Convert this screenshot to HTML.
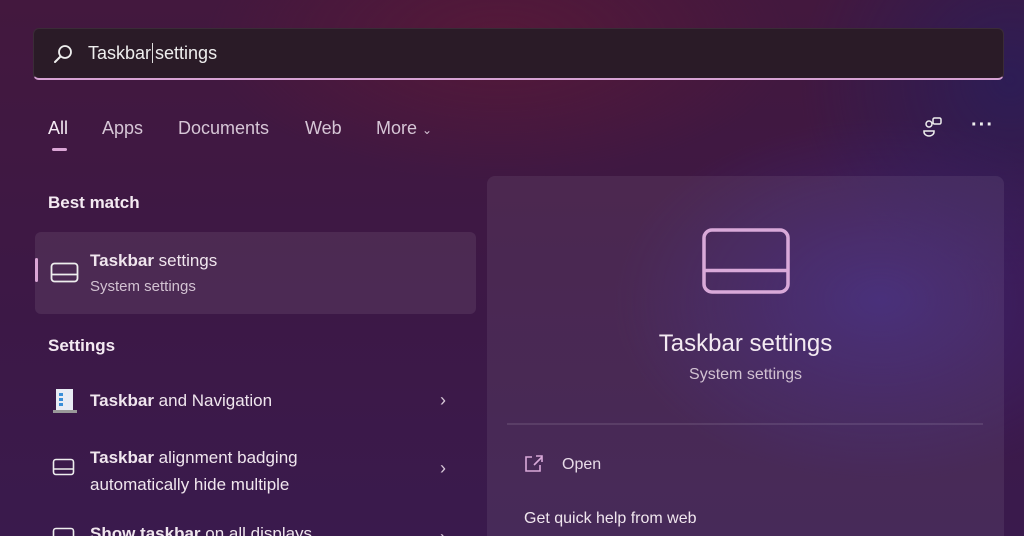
<!DOCTYPE html>
<html style="width:1024px;height:536px;overflow:hidden"><head><meta charset="utf-8"><style>
*{margin:0;padding:0;box-sizing:border-box}
body{width:1024px;height:536px;overflow:hidden;position:relative;font-family:"Segoe UI","Liberation Sans",sans-serif;color:#f2e8f0;
background:
radial-gradient(ellipse 380px 260px at 880px 300px,rgba(60,35,120,.85),transparent 70%),
radial-gradient(ellipse 420px 200px at 500px 40px,rgba(90,25,55,.8),transparent 70%),
radial-gradient(ellipse 300px 300px at 1010px 80px,rgba(40,30,90,.8),transparent 70%),
linear-gradient(180deg,#43183e 0%,#3d1845 50%,#3a1a4d 100%);}
.abs{position:absolute;white-space:nowrap}
.search{left:33px;top:28px;width:971px;height:52px;background:#2a1b27;border-radius:6px;border:1px solid rgba(255,255,255,.08);border-bottom:2px solid #d7a2d4}
.tab{top:118px;font-size:18px;color:#d6c6d6}
.h{font-size:17px;font-weight:bold;color:#f4eaf2}
.t{font-size:17px;color:#f0e6ee}
.s{font-size:15px;color:#d2c2d2}
.chev{font-size:18px;color:#d8c8d8}
</style></head><body>
<div class="abs search"></div>
<svg class="abs" style="left:52px;top:43px" width="22" height="22" viewBox="0 0 22 22"><circle cx="13" cy="9" r="6" fill="none" stroke="#eee" stroke-width="1.8"/><path d="M8.5 13.5 3 19" stroke="#eee" stroke-width="2" stroke-linecap="round"/></svg>
<div class="abs" style="left:88px;top:43px;font-size:18px;color:#eee">Taskbar<span style="border-left:1px solid #ddd;margin-left:1px;margin-right:2px"></span>settings</div>

<div class="abs tab" style="left:48px;color:#f4eaf4">All</div>
<div class="abs" style="left:52px;top:148px;width:15px;height:3px;border-radius:2px;background:#dba6d6"></div>
<div class="abs tab" style="left:102px">Apps</div>
<div class="abs tab" style="left:178px">Documents</div>
<div class="abs tab" style="left:305px">Web</div>
<div class="abs tab" style="left:376px">More <span style="font-size:12px">&#8964;</span></div>
<svg class="abs" style="left:921px;top:114px" width="24" height="24" viewBox="0 0 24 24" fill="none" stroke="#eee" stroke-width="1.5"><circle cx="8" cy="10" r="3"/><path d="M3 17h10v1a5 4 0 0 1-10 0z"/><rect x="12" y="4" width="8" height="6" rx="1.5"/></svg>
<div class="abs" style="left:971px;top:114px;font-size:20px;font-weight:bold;letter-spacing:1px;color:#eee">&middot;&middot;&middot;</div>

<div class="abs h" style="left:48px;top:193px">Best match</div>
<div class="abs" style="left:35px;top:232px;width:441px;height:82px;border-radius:6px;background:rgba(255,255,255,.08)"></div>
<div class="abs" style="left:35px;top:258px;width:3px;height:24px;border-radius:2px;background:#dba6d6"></div>
<svg class="abs" style="left:50px;top:262px" width="30" height="22" viewBox="0 0 30 22" fill="none" stroke="#eee" stroke-width="1.8"><rect x="1.5" y="1.5" width="26" height="18" rx="3"/><path d="M1.5 12.5h26"/></svg>
<div class="abs t" style="left:90px;top:251px"><b>Taskbar</b> settings</div>
<div class="abs s" style="left:90px;top:278px">System settings</div>

<div class="abs h" style="left:48px;top:336px">Settings</div>
<svg class="abs" style="left:52px;top:388px" width="26" height="26" viewBox="0 0 26 26"><rect x="4" y="1" width="17" height="22" fill="#e8ecf4"/><rect x="7" y="5" width="4" height="3" fill="#3a8fd8"/><rect x="7" y="10" width="4" height="3" fill="#3a8fd8"/><rect x="7" y="15" width="4" height="3" fill="#3a8fd8"/><rect x="1" y="22" width="24" height="3" fill="#999"/></svg>
<div class="abs t" style="left:90px;top:391px"><b>Taskbar</b> and Navigation</div>
<div class="abs chev" style="left:440px;top:390px">&#8250;</div>
<svg class="abs" style="left:52px;top:458px" width="24" height="20" viewBox="0 0 24 20" fill="none" stroke="#eee" stroke-width="1.6"><rect x="1.5" y="1.5" width="20" height="15" rx="2.5"/><path d="M1.5 11h20"/></svg>
<div class="abs t" style="left:90px;top:448px"><b>Taskbar</b> alignment badging</div>
<div class="abs t" style="left:90px;top:475px">automatically hide multiple</div>
<div class="abs chev" style="left:440px;top:458px">&#8250;</div>
<svg class="abs" style="left:52px;top:527px" width="24" height="20" viewBox="0 0 24 20" fill="none" stroke="#eee" stroke-width="1.6"><rect x="1.5" y="1.5" width="20" height="15" rx="2.5"/></svg>
<div class="abs t" style="left:90px;top:524px"><b>Show taskbar</b> on all displays</div>
<div class="abs chev" style="left:440px;top:527px">&#8250;</div>

<div class="abs" style="left:487px;top:176px;width:517px;height:360px;border-radius:8px 8px 0 0;background:rgba(255,255,255,.07)"></div>
<svg class="abs" style="left:701px;top:227px" width="90" height="68" viewBox="0 0 90 68" fill="none" stroke="#d9a9d9" stroke-width="3.5"><rect x="3" y="3" width="84" height="62" rx="8"/><path d="M3 43.5h84"/></svg>
<div class="abs" style="left:487px;width:517px;text-align:center;top:330px;font-size:24px;color:#f4eaf2">Taskbar settings</div>
<div class="abs s" style="left:487px;width:517px;text-align:center;top:366px;font-size:16px">System settings</div>
<div class="abs" style="left:507px;top:423px;width:476px;height:2px;background:rgba(255,255,255,.1)"></div>
<svg class="abs" style="left:523px;top:454px" width="22" height="20" viewBox="0 0 22 20" fill="none" stroke="#d9a9d9" stroke-width="1.6"><path d="M9 3H3v14h14v-6M11 11l8-8M13 2h6v6"/></svg>
<div class="abs" style="left:562px;top:456px;font-size:16px;color:#e8dce8">Open</div>
<div class="abs" style="left:524px;top:510px;font-size:16px;color:#f0e6ee">Get quick help from web</div>
</body></html>
